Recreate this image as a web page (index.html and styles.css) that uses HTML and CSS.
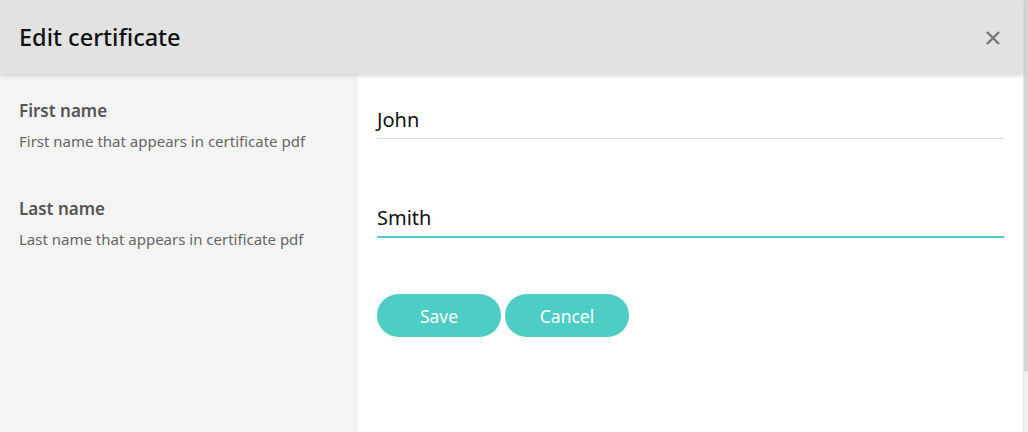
FILE: index.html
```html
<!DOCTYPE html>
<html>
<head>
<meta charset="utf-8">
<link rel="stylesheet" href="styles.css">
</head>
<body>
<div class="app">
  <header class="header">
    <h1 class="title">Edit certificate</h1>
    <button class="close" aria-label="Close">
      <svg width="16" height="16" viewBox="0 0 16 16"><path d="M2 2L14 14M14 2L2 14" stroke="#777" stroke-width="2.4" fill="none"/></svg>
    </button>
  </header>
  <div class="content">
    <aside class="side">
      <div class="row">
        <div class="label">First name</div>
        <div class="desc">First name that appears in certificate pdf</div>
      </div>
      <div class="row">
        <div class="label">Last name</div>
        <div class="desc">Last name that appears in certificate pdf</div>
      </div>
    </aside>
    <main class="form">
      <div class="row">
        <div class="field">John</div>
      </div>
      <div class="row">
        <div class="field active">Smith</div>
      </div>
      <div class="actions">
        <button class="btn">Save</button>
        <button class="btn">Cancel</button>
      </div>
    </main>
  </div>
</div>
<div class="scrollbar"><div class="thumb"></div></div>
</body>
</html>
```
FILE: styles.css
```css
html, body {
  margin: 0;
  height: 100%;
}
body {
  display: flex;
  font-family: "Noto Sans", "Open Sans", sans-serif;
  overflow: hidden;
}
.app {
  flex: 1;
  display: flex;
  flex-direction: column;
  min-width: 0;
}
.header {
  height: 74px;
  flex: none;
  background: #e2e2e2;
  display: flex;
  align-items: center;
  justify-content: space-between;
  padding: 0 19px;
  box-shadow: 0 2px 4px rgba(0, 0, 0, 0.14);
  position: relative;
  z-index: 1;
}
.title {
  margin: 0;
  font-size: 23.5px;
  font-weight: 500;
  color: #111;
}
.close {
  border: 0;
  background: none;
  padding: 0;
  margin-right: 3px;
  margin-top: 2px;
  display: flex;
}
.content {
  flex: 1;
  display: flex;
}
.side {
  width: 358px;
  flex: none;
  background: #f4f4f4;
  box-sizing: border-box;
  padding: 26px 19px 0;
}
.side .row {
  height: 98px;
}
.label {
  font-size: 17px;
  font-weight: 600;
  color: #555;
  line-height: 22px;
}
.desc {
  margin-top: 9px;
  font-size: 15px;
  color: #666;
  line-height: 20px;
}
.form {
  flex: 1;
  padding: 33px 19px 0;
}
.form .row {
  height: 98px;
}
.field {
  font-size: 20px;
  color: #111;
  line-height: 26px;
  padding-bottom: 5px;
  border-bottom: 1px solid #dcdcdc;
}
.field.active {
  border-bottom: 2px solid #4ecdc4;
  padding-bottom: 5px;
}
.actions {
  display: flex;
  gap: 4px;
  margin-top: -9px;
}
.btn {
  width: 124px;
  height: 43px;
  border: 0;
  border-radius: 22px;
  background: #4ecdc4;
  color: #fff;
  font-family: "Noto Sans", "Open Sans", sans-serif;
  font-size: 17.5px;
}
.scrollbar {
  width: 4px;
  flex: none;
  background: #f0f0f0;
  border-left: 1px solid #e6e6e6;
}
.thumb {
  height: 372px;
  background: #d6d6d6;
  border-radius: 0 0 3px 3px;
}
```
